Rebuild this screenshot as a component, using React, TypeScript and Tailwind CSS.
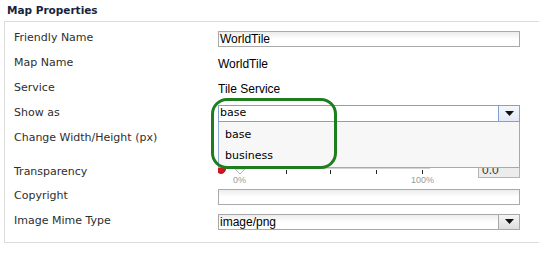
const ui = { fontFamily: '"DejaVu Sans", Verdana, sans-serif' };
const arial = { fontFamily: '"Liberation Sans", Arial, sans-serif' };

function Arrow() {
	return (
		<svg width="9" height="5" viewBox="0 0 9 5">
			<path d="M0 0h9L4.5 5z" fill="#111" />
		</svg>
	);
}

function Row({ label, children, tall }: { label: string; children?: React.ReactNode; tall?: boolean }) {
	return (
		<div className={tall ? "flex h-[33px] items-start" : "flex h-[25px] items-center"}>
			<div className={"w-[204px] text-[11px] text-[#2e2e2e]" + (tall ? " pt-[13px]" : "")} style={ui}>
				{label}
			</div>
			{children}
		</div>
	);
}

function TextBox({ value }: { value?: string }) {
	return (
		<div
			className="flex h-[16px] w-[302px] items-center border border-[#a9a9a9] bg-gradient-to-b from-[#ececec] via-white to-white pl-[1px] text-[12px] text-black"
			style={arial}
		>
			{value}
		</div>
	);
}

function Slider() {
	return (
		<div className="relative h-[33px] w-[302px]">
			<svg width="240" height="33" viewBox="0 0 240 33" className="absolute left-0 top-0">
				<rect x="22" y="15" width="190" height="3" fill="#d4d4d4" />
				<circle cx="3" cy="18" r="4.5" fill="#d9121b" stroke="#8a0a0a" strokeWidth="0.8" />
				<path d="M17 18h10l-5 5z" fill="#fff" stroke="#b0b0b0" />
				{[68, 112, 158, 204].map((x) => (
					<line key={x} x1={x + 0.5} y1="19" x2={x + 0.5} y2="23" stroke="#222" />
				))}
			</svg>
			<span className="absolute left-[15px] top-[23px] text-[9px] text-[#9a9a9a]" style={arial}>
				0%
			</span>
			<span className="absolute left-[193px] top-[23px] text-[9px] text-[#9a9a9a]" style={arial}>
				100%
			</span>
			<div
				className="absolute left-[260px] top-[10px] flex h-[17px] w-[42px] items-center border border-[#b5b5b5] bg-[#ececec] pl-[3px] text-[12px] text-[#333]"
				style={arial}
			>
				0.0
			</div>
		</div>
	);
}

export default function App() {
	return (
		<div className="h-[268px] w-[539px] overflow-hidden bg-white">
			<div className="flex h-[21px] items-center pl-[7px] text-[10.5px] font-bold text-[#17233d]" style={ui}>
				Map Properties
			</div>
			<div className="ml-[4px] border-b border-l border-t border-[#dcdcdc] pb-[8px] pl-[9px] pt-[4px]">
				<Row label="Friendly Name">
					<TextBox value="WorldTile" />
				</Row>
				<Row label="Map Name">
					<span className="text-[12px] text-black" style={arial}>
						WorldTile
					</span>
				</Row>
				<Row label="Service">
					<span className="text-[12px] text-black" style={arial}>
						Tile Service
					</span>
				</Row>
				<Row label="Show as">
					<div className="relative z-10 w-[302px]">
						<div className="flex h-[17px] border border-[#7f9fd6] bg-white">
							<div className="flex flex-1 items-center pl-[1px] text-[11px] text-black" style={ui}>
								base
							</div>
							<div className="flex w-[21px] items-center justify-center border-l border-[#7f9fd6] bg-gradient-to-b from-[#f4f7fc] to-[#e3eaf6]">
								<Arrow />
							</div>
						</div>
						<div className="absolute left-0 right-0 top-full h-[46px] border border-t-0 border-[#8fadd9] bg-[#f7f7f7] pt-[3px] text-[11px] text-black" style={ui}>
							<div className="flex h-[21px] items-center pl-[6px]">base</div>
							<div className="flex h-[21px] items-center pl-[6px]">business</div>
						</div>
						<div className="absolute left-[-7px] top-[-7px] h-[71px] w-[126px] rounded-[16px] border-[3px] border-[#1e7d1e]" />
					</div>
				</Row>
				<Row label="Change Width/Height (px)" />
				<Row label="Transparency" tall>
					<Slider />
				</Row>
				<Row label="Copyright">
					<TextBox />
				</Row>
				<Row label="Image Mime Type">
					<div className="flex h-[16px] w-[302px] border border-[#a9a9a9] bg-gradient-to-b from-[#ececec] via-white to-white">
						<div className="flex flex-1 items-center pl-[1px] text-[12px] text-black" style={arial}>
							image/png
						</div>
						<div className="flex w-[21px] items-center justify-center border-l border-[#a9a9a9] bg-gradient-to-b from-[#f6f6f6] to-[#dedede]">
							<Arrow />
						</div>
					</div>
				</Row>
			</div>
		</div>
	);
}
